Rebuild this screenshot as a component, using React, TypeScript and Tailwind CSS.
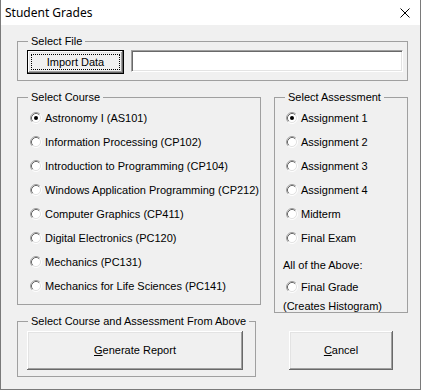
import React from "react";

const courses = [
  "Astronomy I (AS101)",
  "Information Processing (CP102)",
  "Introduction to Programming (CP104)",
  "Windows Application Programming (CP212)",
  "Computer Graphics (CP411)",
  "Digital Electronics (PC120)",
  "Mechanics (PC131)",
  "Mechanics for Life Sciences (PC141)",
];

const assessments = ["Assignment 1", "Assignment 2", "Assignment 3", "Assignment 4", "Midterm", "Final Exam"];

const bevel =
  "shadow-[inset_-1px_-1px_0_#696969,inset_1px_1px_0_#ffffff,inset_-2px_-2px_0_#a0a0a0,inset_2px_2px_0_#e3e3e3]";

function Radio({ checked }: { checked?: boolean }) {
  return (
    <svg width="12" height="12" viewBox="0 0 12 12" className="shrink-0">
      <circle cx="6" cy="6" r="4.5" fill="#ffffff" />
      <path d="M2.11 9.89 A5.5 5.5 0 0 1 9.89 2.11" fill="none" stroke="#a0a0a0" strokeWidth="1" />
      <path d="M9.89 2.11 A5.5 5.5 0 0 1 2.11 9.89" fill="none" stroke="#ffffff" strokeWidth="1" />
      <path d="M2.82 9.18 A4.5 4.5 0 0 1 9.18 2.82" fill="none" stroke="#696969" strokeWidth="1" />
      <path d="M9.18 2.82 A4.5 4.5 0 0 1 2.82 9.18" fill="none" stroke="#e3e3e3" strokeWidth="1" />
      {checked && <circle cx="6" cy="6" r="2" fill="#000000" />}
    </svg>
  );
}

function Option({ label, checked }: { label: string; checked?: boolean }) {
  return (
    <div className="h-[24px] flex items-center gap-[3px]">
      <Radio checked={checked} />
      <span className="leading-[14px] whitespace-nowrap">{label}</span>
    </div>
  );
}

// frame with caption sitting on its top edge
function Frame({ title, className, children }: { title: string; className?: string; children?: React.ReactNode }) {
  return (
    <div className={`relative border border-[#a0a0a0] ${className ?? ""}`}>
      <span className="absolute -top-[8px] left-[10px] px-[3px] h-[14px] leading-[14px] bg-[#f0f0f0] whitespace-nowrap">
        {title}
      </span>
      {children}
    </div>
  );
}

export default function App() {
  return (
    <div className="w-[421px] h-[390px] bg-[#f0f0f0] border-x border-b border-[#7a7a7a] flex flex-col text-[11px] text-black font-[Tahoma,'Liberation_Sans',Arial,sans-serif]">
      {/* Title bar */}
      <div className="h-[25px] shrink-0 bg-white flex items-center justify-between pl-[4px] pr-[10px]">
        <span className="text-[12px] font-['Segoe_UI','Noto_Sans',sans-serif]">Student Grades</span>
        <svg width="10" height="10" viewBox="0 0 10 10">
          <path d="M0.5 0.5 L9.5 9.5 M9.5 0.5 L0.5 9.5" stroke="#000" strokeWidth="1" />
        </svg>
      </div>

      <div className="pl-[16px] pt-[16px] flex flex-col">
        <Frame title="Select File" className="w-[391px] h-[40px] flex items-start gap-[7px] pl-[9px] pt-[8px]">
          <button className={`w-[97px] h-[24px] border border-black bg-[#f0f0f0] ${bevel} p-[3px] flex`}>
            <span className="flex-1 border border-dotted border-black flex items-center justify-center leading-[14px]">
              Import Data
            </span>
          </button>
          <div className="w-[272px] h-[22px] bg-white border border-t-[#a0a0a0] border-l-[#a0a0a0] border-r-white border-b-white shadow-[inset_1px_1px_0_#696969,inset_-1px_-1px_0_#e3e3e3]" />
        </Frame>

        <div className="flex items-start gap-[13px] mt-[16px]">
          <Frame title="Select Course" className="w-[244px] h-[208px] pl-[12px] pt-[8px]">
            {courses.map((c, i) => (
              <Option key={c} label={c} checked={i === 0} />
            ))}
          </Frame>
          <Frame title="Select Assessment" className="w-[134px] h-[216px] pl-[11px] pt-[8px] !pl-[11px]">
            {assessments.map((a, i) => (
              <Option key={a} label={a} checked={i === 0} />
            ))}
            <div className="-ml-[3px] mt-[7px] h-[16px] leading-[16px]">All of the Above:</div>
            <div className="mt-[2px]">
              <Option label="Final Grade" />
            </div>
            <div className="-ml-[3px] h-[14px] leading-[14px]">(Creates Histogram)</div>
          </Frame>
        </div>

        <div className="flex items-start mt-[8px]">
          <Frame title="Select Course and Assessment From Above" className="w-[239px] h-[56px] pl-[9px] pt-[9px]">
            <button className={`w-[216px] h-[39px] bg-[#f0f0f0] ${bevel} flex items-center justify-center`}>
              <span>
                <span className="underline">G</span>enerate Report
              </span>
            </button>
          </Frame>
          <button className={`ml-[33px] mt-[10px] w-[104px] h-[39px] bg-[#f0f0f0] ${bevel} flex items-center justify-center`}>
            <span>
              <span className="underline">C</span>ancel
            </span>
          </button>
        </div>
      </div>
    </div>
  );
}
